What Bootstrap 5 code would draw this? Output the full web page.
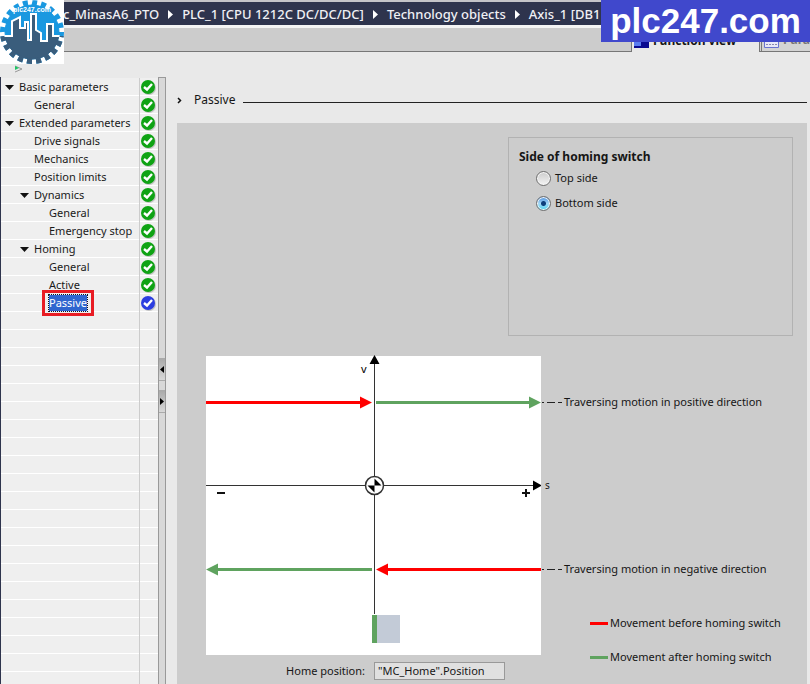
<!DOCTYPE html>
<html lang="en">
<head>
<meta charset="utf-8">
<meta name="viewport" content="width=device-width, initial-scale=1">
<title>Axis_1 – Homing – Passive</title>
<link href="https://cdn.jsdelivr.net/npm/bootstrap@5.3.0/dist/css/bootstrap.min.css" rel="stylesheet">
<style>
  body { font: 11px/18px "Noto Sans", sans-serif; color: #161616; background: #e9e9e9; }
  .crumbbar { height: 28px; background: #2e344d; border-top: 2px solid #c4c4c8; border-bottom: 3px solid #f4f4f4; padding: 1px 0 0 63px; font-size: 13px; font-weight: 500; white-space: nowrap; }
  .crumbbar .breadcrumb { flex-wrap: nowrap; gap: 9px; }
  .crumbbar a { color: #f0f0f4; text-decoration: none; }
  .crumbbar li { gap: 9px; }
  .tabbar { height: 24px; }
  .tabfill { background: #ccc; border-bottom: 1px solid #777; border-right: 1px solid #777; }
  .viewtab { border: 0; background: #e9e9e9; width: 127px; height: 24px; padding: 1px 2px 0; gap: 4px; font-size: 12px; font-weight: 700; color: #161616; line-height: 24px; white-space: nowrap; }
  .viewtab.off { width: 51px; overflow: hidden; background: #d4d4d4; color: #777; border-left: 3px double #777; border-bottom: 1px solid #777; }
  .brandmark { width: 64px; height: 64px; }
  .sitename { width: 209px; height: 42px; background: #4048cc; color: #fff; font: bold 35px/42px "Liberation Sans", sans-serif; text-align: center; }
  .toolrow { height: 25px; padding: 13px 0 0 14px; }
  .edge { width: 1px; background: #2e344d; }
  .tree { width: 157px; padding-top: 1px; }
  .tree ul { flex: 1 1 0; overflow: hidden; background: linear-gradient(#ccc, #ccc) 138px 0 / 1px 100% no-repeat, repeating-linear-gradient(#efefef 0 17px, #fff 17px 18px); }
  .tree li { height: 18px; }
  .tree a { color: #1a1a1a; text-decoration: none; line-height: 18px; white-space: nowrap; }
  .lv1 { padding-left: 4px; } .lv2 { padding-left: 19px; } .lv3 { padding-left: 34px; }
  .twisty { width: 9px; height: 5px; margin-right: 5px; }
  .gap-twisty { width: 14px; }
  .state { width: 18px; }
  .picked { background: #2f66cf; color: #fff !important; outline: 1px dotted #112; line-height: 16px !important; }
  .callout { border: 3px solid #e81c24; margin: -4px 0 -4px -7px; padding: 2px 4px; background: #efefef; position: relative; }
  .splitter { width: 8px; background: #d8d8d8; border: 1px solid #999; border-width: 1px 1px 0 1px; padding-top: 280px; }
  .splitter button { width: 6px; height: 23px; border: 1px solid #aaa; border-width: 1px 0; background: linear-gradient(#aaa, #d8d8d8); padding: 0; margin-bottom: 9px; line-height: 0; }
  .content { padding: 0 3px 0 11px; }
  .headrow { height: 46px; font-size: 12px; }
  .rule { height: 1px; background: #222; margin-top: 4px; }
  .canvas { background: #ccc; border-bottom: 1px solid #bbb; padding: 14px 14px 4px 29px; }
  .sidebox { width: 285px; height: 199px; border: 1px solid #b2b2b2; padding: 9px 10px; }
  .sidebox legend { font-size: 12px; font-weight: 700; line-height: 20px; margin: 0 0 2px; }
  .choice { height: 18px; margin: 0 0 7px 17px; gap: 4px; }
  .choice input { appearance: none; width: 15px; height: 15px; margin: 0; border: 1px solid #707070; border-radius: 50%; background: linear-gradient(#ccc, #f4f4f4); box-shadow: inset 0 0 0 1px #f6f6f6; }
  .choice input:checked { background: radial-gradient(circle, #0d3f7c 0 2px, transparent 3px), linear-gradient(#4a8fe0, #a5d8f6 50%, #4fd8f4); }
  .plotrow { margin-top: 19px; }
  .legendcol > div { height: 20px; line-height: 20px; white-space: nowrap; }
  .dash { width: 22px; height: 1px; background: linear-gradient(90deg, #222 0 2px, transparent 2px 5px, #222 5px 13px, transparent 13px 16px, #222 16px 20px, transparent 20px); margin-left: 1px; }
  .swatch { width: 18px; height: 3px; margin-right: 2px; }
  .swatch.red { background: red; } .swatch.green { background: #5fa35f; }
  .first { margin-top: 37px; } .axis { margin-top: 63px; padding-left: 4px; font-size: 10px; } .second { margin-top: 64px; }
  .key { padding-left: 49px; } .k1 { margin-top: 34px; } .k2 { margin-top: 14px; }
  .homepos { padding: 7px 36px 0 0; gap: 9px; }
  .homepos input { width: 131px; height: 18px; border: 1px solid #999; border-radius: 0; background: #e0e0e0; padding: 0 3px; font: inherit; color: inherit; }
</style>
<script src="https://cdn.jsdelivr.net/npm/bootstrap@5.3.0/dist/js/bootstrap.bundle.min.js"></script>
</head>
<body class="d-flex flex-column min-vh-100 position-relative overflow-x-hidden">
<svg class="d-none">
  <defs>
    <g id="tick"><path d="M4 8 7 10.500 12 5" fill="none" stroke="#fff" stroke-width="2.400"/></g>
    <symbol id="ok" viewBox="0 0 16 16"><circle cx="9" cy="9" r="7" fill="#999" opacity=".5"/><circle cx="8" cy="8" r="7" fill="#0fa314"/><use href="#tick"/></symbol>
    <symbol id="now" viewBox="0 0 16 16"><circle cx="9" cy="9" r="7" fill="#999" opacity=".5"/><circle cx="8" cy="8" r="7" fill="#2c3ee0"/><use href="#tick"/></symbol>
    <symbol id="down" viewBox="0 0 9 5"><path d="M0 0h9L4.500 5z" fill="#111"/></symbol>
    <symbol id="next" viewBox="0 0 5 9"><path d="M0 0l5 4.500L0 9z" fill="#fff"/></symbol>
  </defs>
</svg>

<nav class="crumbbar d-flex align-items-center" aria-label="Breadcrumb">
  <ol class="breadcrumb m-0">
    <li class="d-flex align-items-center"><a href="#">c_MinasA6_PTO</a><svg width="5" height="9"><use href="#next"/></svg></li>
    <li class="d-flex align-items-center"><a href="#">PLC_1 [CPU 1212C DC/DC/DC]</a><svg width="5" height="9"><use href="#next"/></svg></li>
    <li class="d-flex align-items-center"><a href="#">Technology objects</a><svg width="5" height="9"><use href="#next"/></svg></li>
    <li><a href="#">Axis_1 [DB1</a></li>
  </ol>
</nav>
<div class="tabbar d-flex">
  <div class="tabfill flex-grow-1"></div>
  <button class="viewtab d-flex align-items-center" type="button"><svg width="15" height="15"><path fill="#5a7cf0" d="M0 0h7v15H0z"/><path fill="#0a0a90" d="M7 0h8v15H0v-2h7z"/></svg>Function view</button>
  <button class="viewtab off d-flex align-items-center" type="button"><svg width="15" height="15" class="flex-shrink-0"><path fill="#e8e8f8" stroke="#6a74d0" d="M.5.5h14v14H.5z"/><path stroke="#8a8ab0" stroke-dasharray="2 1" d="M2 5.500h11M2 8.500h11M2 11.500h11"/></svg>Parameter view</button>
</div>
<div class="toolrow d-flex align-items-start"><svg width="9" height="8"><path d="M1 1l7 3-7 3" fill="none" stroke="#999"/><path d="M1 1l4 2-4 2z" fill="#1fc565"/></svg></div>

<main class="d-flex flex-grow-1">
  <div class="edge"></div>
  <nav class="tree d-flex flex-shrink-0" aria-label="Parameters">
    <ul class="list-unstyled m-0" id="tree"></ul>
  </nav>
  <div class="splitter flex-shrink-0">
    <button type="button" class="d-block" aria-label="Collapse"><svg width="4" height="7"><path d="M4 0v7L0 3.500z"/></svg></button>
    <button type="button" class="d-block" aria-label="Expand"><svg width="4" height="7"><path d="M0 0v7l4-3.500z"/></svg></button>
  </div>
  <section class="content flex-grow-1 d-flex flex-column">
    <div class="headrow d-flex align-items-center"><svg width="5" height="7" class="me-2 ms-0"><path d="M1 1l2.500 2.500L1 6" fill="none" stroke="#111" stroke-width="1.500"/></svg><span class="px-1">Passive</span><span class="rule flex-grow-1 ms-1"></span></div>
    <div class="canvas flex-grow-1">
      <fieldset class="sidebox ms-auto">
        <legend>Side of homing switch</legend>
        <div class="choice d-flex align-items-center"><input type="radio" name="side" id="top"><label for="top">Top side</label></div>
        <div class="choice d-flex align-items-center"><input type="radio" name="side" id="bottom" checked><label for="bottom">Bottom side</label></div>
      </fieldset>
      <div class="plotrow d-flex align-items-start">
        <div>
          <svg class="d-block" width="335" height="300" role="img" aria-label="Velocity over position">
            <path fill="#fff" d="M0 1h335v299H0z"/>
            <path stroke="#333" d="M168.500 8v251M0 130.500h328"/>
            <path d="M168.500 0l5 9h-10zM336 130.500l-9-5v10z"/>
            <path stroke="red" stroke-width="3" d="M0 47.500h155M181 214.500h154"/>
            <path fill="red" d="M166 47.500l-12-6v12zM170 214.500l12-6v12z"/>
            <path stroke="#5fa35f" stroke-width="3" d="M170 47.500h155M11 214.500h155"/>
            <path fill="#5fa35f" d="M335 47.500l-12-6v12zM0 214.500l12-6v12z"/>
            <circle cx="168.500" cy="130.500" r="9" fill="#fff" stroke="#333" stroke-width="1.500"/>
            <path d="M168.500 130.500v-7l7 7zM168.500 130.500v7l-7-7z"/>
            <path stroke="#111" stroke-width="2" d="M11 138h8M316 138h8M320 134v8"/>
            <path fill="#c3cbd7" d="M171 260h23v28h-23z"/><path fill="#5fa35f" d="M166 260h5v28h-5z"/>
            <text x="155" y="18" font-size="11">v</text>
          </svg>
          <div class="homepos d-flex align-items-center justify-content-end"><label for="home">Home position:</label><input id="home" type="text" value="&quot;MC_Home&quot;.Position"></div>
        </div>
        <div class="legendcol">
          <div class="first d-flex align-items-center"><span class="dash"></span>Traversing motion in positive direction</div>
          <div class="axis">s</div>
          <div class="second d-flex align-items-center"><span class="dash"></span>Traversing motion in negative direction</div>
          <div class="key k1 d-flex align-items-center"><span class="swatch red"></span>Movement before homing switch</div>
          <div class="key k2 d-flex align-items-center"><span class="swatch green"></span>Movement after homing switch</div>
        </div>
      </div>
    </div>
  </section>
</main>

<svg class="brandmark position-absolute top-0 start-0" viewBox="0 0 64 64" role="img" aria-label="plc247.com">
  <defs>
    <clipPath id="lower"><path id="skyline" d="M-2 36H12V21L20 17V28H25V22H28V40H31V14H36V30L41 33V41H47V24H53V36H66V66H-2z"/></clipPath>
    <clipPath id="disc"><circle cx="32" cy="32" r="28"/></clipPath>
    <g id="gear"><circle cx="32" cy="32" r="27"/><circle cx="32" cy="32" r="29" fill="none" stroke-width="6" pathLength="40" stroke-dasharray="1.100 .9"/></g>
  </defs>
  <path fill="#fff" d="M0 0h64v64H0z"/>
  <use href="#gear" fill="#1a98e0" stroke="#1a98e0"/>
  <use href="#gear" fill="#3a5d7c" stroke="#3a5d7c" clip-path="url(#lower)"/>
  <g clip-path="url(#disc)"><use href="#skyline" fill="none" stroke="#fff" stroke-width="2"/></g>
  <text x="32" y="12" text-anchor="middle" font-size="7" font-weight="700" fill="#fff" stroke="none" font-family="Liberation Sans, sans-serif">plc247.com</text>
</svg>
<div class="sitename position-absolute top-0 end-0">plc247.com</div>

<script>
  const rows = [[1,1,"Basic parameters"],[2,0,"General"],[1,1,"Extended parameters"],[2,0,"Drive signals"],[2,0,"Mechanics"],[2,0,"Position limits"],[2,1,"Dynamics"],[3,0,"General"],[3,0,"Emergency stop"],[2,1,"Homing"],[3,0,"General"],[3,0,"Active"],[3,0,"Passive"]];
  document.getElementById("tree").innerHTML = rows.map(([lv, open, name]) => {
    const on = name === "Passive";
    const mark = open ? '<svg class="twisty"><use href="#down"/></svg>' : '<span class="gap-twisty"></span>';
    const link = on ? `<span class="callout d-flex"><a href="#" class="picked" aria-current="page">${name}</a></span>` : `<a href="#">${name}</a>`;
    return `<li class="d-flex"><span class="lv${lv} flex-grow-1 d-flex align-items-center">${mark}${link}</span><span class="state d-flex align-items-center"><svg width="16" height="16"><use href="#${on ? "now" : "ok"}"/></svg></span></li>`;
  }).join("");
</script>
</body>
</html>
